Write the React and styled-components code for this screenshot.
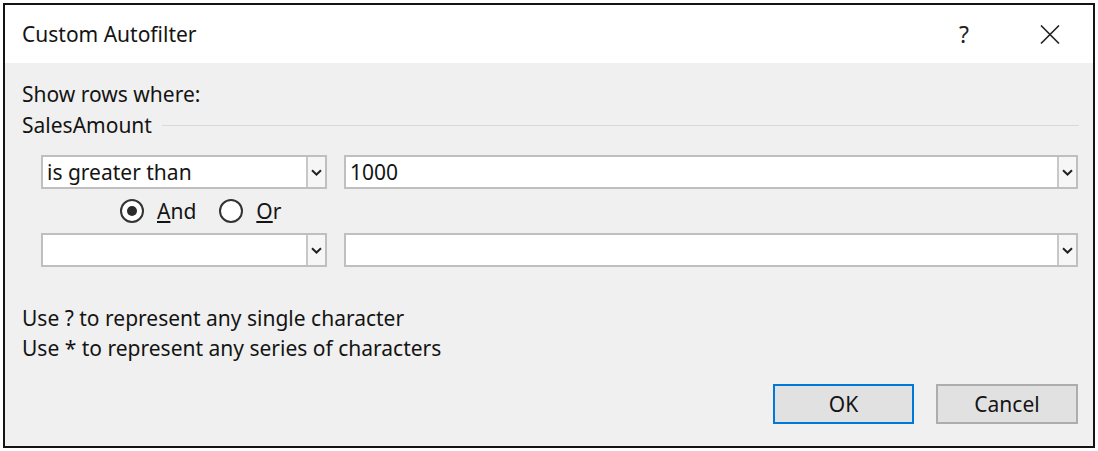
import React from 'react';
import styled, { createGlobalStyle } from 'styled-components';

const GlobalStyle = createGlobalStyle`
  html, body {
    margin: 0;
    padding: 0;
    background: #fff;
  }
  body {
    font-family: "Noto Sans", "Open Sans", sans-serif;
    color: #141414;
  }
`;

const Page = styled('div')`
  width: 1098px;
  height: 451px;
  padding: 3px;
  box-sizing: border-box;
`;

const Window = styled('div')`
  width: 1092px;
  height: 445px;
  box-sizing: border-box;
  border: 2px solid #141414;
  display: flex;
  flex-direction: column;
  background: #f0f0f0;
`;

const TitleBar = styled('div')`
  height: 58px;
  flex: none;
  background: #fff;
  display: flex;
  align-items: center;
  padding: 0 33px 0 17px;
  font-size: 21px;
`;

const Title = styled('div')`
  flex: 1;
`;

const HelpMark = styled('span')`
  font-size: 23px;
  margin-right: 71px;
  color: #222;
`;

const CloseIcon = styled('svg')`
  display: block;
`;

const Body = styled('div')`
  flex: 1;
  display: flex;
  flex-direction: column;
  padding: 16px 15px 22px 17px;
  font-size: 21px;
  line-height: 31px;
`;

const FieldRow = styled('div')`
  display: flex;
  align-items: center;
`;

const Rule = styled('div')`
  flex: 1;
  height: 1px;
  background: #d9d9d9;
  margin: 0 -1px 0 10px;
`;

const Criteria = styled('div')`
  display: flex;
  flex-direction: column;
  margin-top: 14px;
  padding-left: 19px;
`;

const ComboRow = styled('div')`
  display: flex;
  gap: 17px;
`;

const Combo = styled('div')`
  width: ${p => p.width}px;
  height: 34px;
  box-sizing: border-box;
  border: 2px solid #bfbfbf;
  background: #fff;
  display: flex;
`;

const ComboValue = styled('div')`
  flex: 1;
  padding-left: 4px;
  line-height: 30px;
`;

const DropButton = styled('div')`
  width: 17px;
  border-left: 2px solid #c8c8c8;
  background: #f6f6f6;
  display: flex;
  align-items: center;
  justify-content: center;
`;

const RadioRow = styled('div')`
  height: 44px;
  display: flex;
  align-items: center;
  padding-left: 79px;
  gap: 23px;
`;

const RadioLabel = styled('label')`
  display: flex;
  align-items: center;
  gap: 13px;
`;

const RadioCircle = styled('span')`
  width: 24px;
  height: 24px;
  box-sizing: border-box;
  border-radius: 50%;
  border: 2px solid #333;
  background: #fff;
  display: flex;
  align-items: center;
  justify-content: center;

  &::after {
    content: '';
    width: 10px;
    height: 10px;
    border-radius: 50%;
    background: ${p => (p.checked ? '#2b2b2b' : 'transparent')};
  }
`;

const Help = styled('div')`
  margin-top: 36px;
  line-height: 30px;
`;

const Buttons = styled('div')`
  margin-top: auto;
  display: flex;
  justify-content: flex-end;
  gap: 22px;
`;

const Button = styled('button')`
  width: ${p => p.width}px;
  height: 40px;
  box-sizing: border-box;
  border: 2px solid ${p => (p.primary ? '#0078d7' : '#adadad')};
  background: #e1e1e1;
  font-family: inherit;
  font-size: 21px;
  color: #141414;
  padding: 0;
`;

const Chevron = () => (
  <svg width="11" height="7" viewBox="0 0 11 7">
    <path d="M1 1.2 L5.5 5.5 L10 1.2" fill="none" stroke="#222" strokeWidth="2" />
  </svg>
);

const Dropdown = ({ width, value }) => (
  <Combo width={width}>
    <ComboValue>{value}</ComboValue>
    <DropButton>
      <Chevron />
    </DropButton>
  </Combo>
);

export default function App() {
  return (
    <Page>
      <GlobalStyle />
      <Window>
        <TitleBar>
          <Title>Custom Autofilter</Title>
          <HelpMark>?</HelpMark>
          <CloseIcon width="20" height="19" viewBox="0 0 20 19">
            <path d="M1 0.5 L19 18.5 M19 0.5 L1 18.5" stroke="#222" strokeWidth="1.6" />
          </CloseIcon>
        </TitleBar>
        <Body>
          <div>Show rows where:</div>
          <FieldRow>
            SalesAmount
            <Rule />
          </FieldRow>
          <Criteria>
            <ComboRow>
              <Dropdown width={286} value="is greater than" />
              <Dropdown width={734} value="1000" />
            </ComboRow>
            <RadioRow>
              <RadioLabel>
                <RadioCircle checked />
                <span><u>A</u>nd</span>
              </RadioLabel>
              <RadioLabel>
                <RadioCircle />
                <span><u>O</u>r</span>
              </RadioLabel>
            </RadioRow>
            <ComboRow>
              <Dropdown width={286} value="" />
              <Dropdown width={734} value="" />
            </ComboRow>
          </Criteria>
          <Help>
            <div>Use ? to represent any single character</div>
            <div>Use * to represent any series of characters</div>
          </Help>
          <Buttons>
            <Button primary width={141}>OK</Button>
            <Button width={142}>Cancel</Button>
          </Buttons>
        </Body>
      </Window>
    </Page>
  );
}
